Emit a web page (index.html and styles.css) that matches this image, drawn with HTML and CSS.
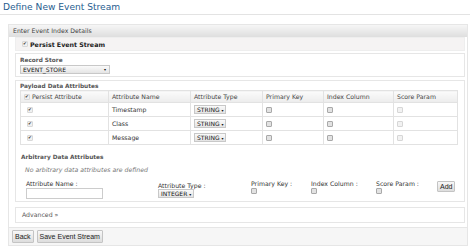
FILE: index.html
```html
<!DOCTYPE html>
<html lang="en">
<head>
    <meta charset="UTF-8">
    <title>Define New Event Stream</title>
    <link rel="stylesheet" href="styles.css">
</head>
<body>
<h1 class="page-title">Define New Event Stream</h1>

<div class="panel">
    <div class="panel-head">Enter Event Index Details</div>
    <div class="panel-body">
        <div class="persist-row">
            <span class="chk on">&#10004;</span>
            <span class="persist-label">Persist Event Stream</span>
        </div>

        <div class="section store">
            <div class="label">Record Store</div>
            <span class="select wide">EVENT_STORE <span class="arrow">&#9662;</span></span>
        </div>

        <div class="section payload">
            <div class="label">Payload Data Attributes</div>
            <table class="attrs">
                <colgroup>
                    <col class="c1"><col class="c2"><col class="c3"><col class="c4"><col class="c5"><col>
                </colgroup>
                <thead>
                    <tr>
                        <th><span class="chk on">&#10004;</span> Persist Attribute</th>
                        <th>Attribute Name</th>
                        <th>Attribute Type</th>
                        <th>Primary Key</th>
                        <th>Index Column</th>
                        <th>Score Param</th>
                    </tr>
                </thead>
                <tbody>
                    <tr>
                        <td><span class="chk on">&#10004;</span></td>
                        <td>Timestamp</td>
                        <td><span class="select">STRING <span class="arrow">&#9662;</span></span></td>
                        <td><span class="chk"></span></td>
                        <td><span class="chk"></span></td>
                        <td><span class="chk off"></span></td>
                    </tr>
                    <tr>
                        <td><span class="chk on">&#10004;</span></td>
                        <td>Class</td>
                        <td><span class="select">STRING <span class="arrow">&#9662;</span></span></td>
                        <td><span class="chk"></span></td>
                        <td><span class="chk"></span></td>
                        <td><span class="chk off"></span></td>
                    </tr>
                    <tr>
                        <td><span class="chk on">&#10004;</span></td>
                        <td>Message</td>
                        <td><span class="select">STRING <span class="arrow">&#9662;</span></span></td>
                        <td><span class="chk"></span></td>
                        <td><span class="chk"></span></td>
                        <td><span class="chk off"></span></td>
                    </tr>
                </tbody>
            </table>

            <div class="label arb">Arbitrary Data Attributes</div>
            <div class="empty-note">No arbitrary data attributes are defined</div>

            <div class="arb-form">
                <div class="field">
                    <span>Attribute Name :</span>
                    <span class="text-input"></span>
                </div>
                <div class="field type">
                    <span>Attribute Type :</span>
                    <span class="select">INTEGER <span class="arrow">&#9662;</span></span>
                </div>
                <div class="field">
                    <span>Primary Key :</span>
                    <span class="chk"></span>
                </div>
                <div class="field">
                    <span>Index Column :</span>
                    <span class="chk"></span>
                </div>
                <div class="field">
                    <span>Score Param :</span>
                    <span class="chk"></span>
                </div>
                <div class="field add-cell">
                    <button class="btn small">Add</button>
                </div>
            </div>
        </div>

        <div class="section advanced">Advanced &raquo;</div>
    </div>
    <div class="button-bar">
        <button class="btn">Back</button>
        <button class="btn">Save Event Stream</button>
    </div>
</div>
</body>
</html>
```

FILE: styles.css
```css
body {
    margin: 0;
    background-color: #ffffff;
    font-family: "DejaVu Sans", Verdana, sans-serif;
    font-size: 6.2px;
    line-height: 7px;
    color: #333333;
}

.page-title {
    margin: 0 4px 0 0;
    padding: 1px 3px 0 3px;
    height: 13px;
    font-size: 9.1px;
    line-height: 12px;
    font-weight: normal;
    color: #275d8f;
    border-bottom: 1px solid #e3e3e3;
}

.panel {
    margin: 9px 8px 0 8px;
    width: 458px;
    border: 1px solid #e6e6e6;
}

.panel-head {
    height: 12px;
    line-height: 12px;
    padding-left: 4px;
    background: linear-gradient(#f6f6f6, #dedede);
    color: #444444;
}

.panel-body {
    padding: 0 2px 4px 6px;
}

.persist-row {
    height: 12px;
    display: flex;
    align-items: center;
    gap: 2px;
    padding-left: 6px;
    background-color: #f5f3f3;
    border: 1px solid #eeeeee;
}

.persist-label {
    font-weight: bold;
    font-size: 6.3px;
    color: #222222;
}

.section {
    margin-top: 2px;
    border: 1px solid #e6e6e6;
    background-color: #ffffff;
}

.store {
    padding: 3px 4px 2px 4px;
}

.label {
    font-weight: bold;
    font-size: 5.8px;
    color: #555555;
}

.payload {
    margin-top: 3px;
    padding: 2px 4px 2px 4px;
}

.attrs {
    border-collapse: collapse;
    width: 438px;
    table-layout: fixed;
}

.attrs col.c1 { width: 88px; }
.attrs col.c2 { width: 82px; }
.attrs col.c3 { width: 72px; }
.attrs col.c4 { width: 61px; }
.attrs col.c5 { width: 70px; }

.attrs th, .attrs td {
    border: 1px solid #e2e2e2;
    text-align: left;
    padding: 0 0 0 3px;
    font-weight: normal;
    white-space: nowrap;
}

.attrs th {
    height: 11px;
    background: linear-gradient(#fbfbfb, #ececec);
    color: #444444;
}

.attrs td {
    height: 13px;
}

.attrs td:first-child {
    padding-left: 6px;
}

.chk {
    display: inline-block;
    box-sizing: border-box;
    width: 6px;
    height: 6px;
    border: 1px solid #a9a9a9;
    background-color: #e2e2e2;
    border-radius: 1px;
    vertical-align: middle;
    font-size: 4.5px;
    line-height: 4px;
    text-align: center;
    color: #222222;
}

.chk.on {
    border-color: #d8d8d8;
    background-color: #f0f0f0;
}

.chk.off {
    border-color: #d6d6d6;
    background-color: #f2f2f2;
}

.select {
    display: inline-block;
    height: 7px;
    line-height: 7px;
    padding: 0 2px;
    border: 1px solid #c8c8c8;
    background: linear-gradient(#fafafa, #e4e4e4);
    color: #111111;
    font-size: 6px;
    vertical-align: middle;
}

.select.wide {
    display: block;
    width: 84px;
    margin-top: 1px;
    position: relative;
}

.select.wide .arrow {
    position: absolute;
    right: 3px;
}

.arrow {
    font-size: 4px;
}

.arb {
    margin-top: 9px;
    padding-left: 1px;
}

.empty-note {
    margin-top: 5px;
    padding-left: 5px;
    font-style: italic;
    color: #777777;
}

.arb-form {
    display: grid;
    grid-template-columns: 132px 93px 60px 65px 61px 30px;
    margin-top: 7px;
    padding-left: 6px;
    align-items: start;
}

.field {
    display: flex;
    flex-direction: column;
    align-items: flex-start;
    gap: 1px;
}

.field.type {
    padding-top: 2px;
    gap: 0;
}

.text-input {
    display: block;
    width: 75px;
    height: 9px;
    border: 1px solid #cccccc;
}

.add-cell {
    padding-top: 1px;
}

.advanced {
    margin-top: 5px;
    height: 14px;
    line-height: 14px;
    padding-left: 6px;
    color: #555555;
}

.button-bar {
    background-color: #f6f6f6;
    border-top: 1px solid #e6e6e6;
    padding: 2px 3px 2px 3px;
    display: flex;
    gap: 3px;
}

.btn {
    font-family: "Liberation Sans", Arial, sans-serif;
    font-size: 7px;
    height: 13px;
    padding: 0 2px;
    border: 1px solid #c4c4c4;
    border-radius: 1px;
    background: linear-gradient(#f8f8f8, #dddddd);
    color: #222222;
}

.btn.small {
    height: 11px;
    padding: 0 2px;
}
```
